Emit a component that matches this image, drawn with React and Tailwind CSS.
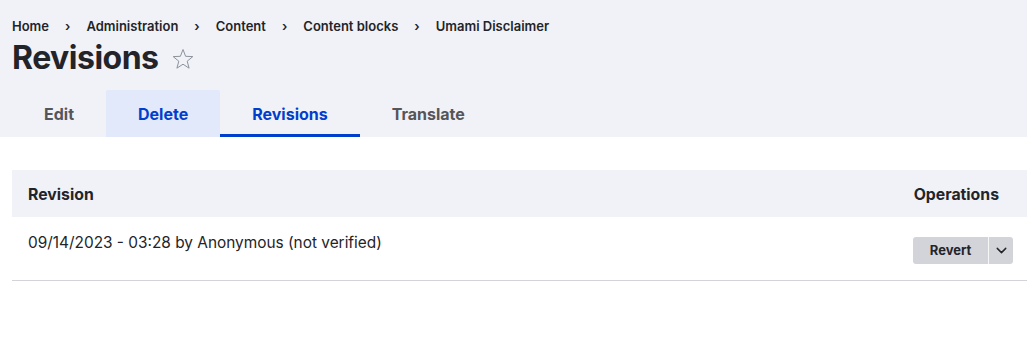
import { ChevronDown } from "lucide-react";

const crumbs = ["Home", "Administration", "Content", "Content blocks", "Umami Disclaimer"];

function Star() {
  return (
    <svg width="24" height="24" viewBox="0 0 24 24" fill="none" stroke="#8e929c" strokeWidth="1" strokeLinejoin="miter">
      <path d="M12 2.5l2.6 6.8 7.2.3-5.6 4.6 1.9 7-6.1-4-6.1 4 1.9-7-5.6-4.6 7.2-.3z" />
    </svg>
  );
}

export default function App() {
  const tabs = [
    { label: "Edit", state: "idle" },
    { label: "Delete", state: "hover" },
    { label: "Revisions", state: "active" },
    { label: "Translate", state: "idle" },
  ];

  return (
    <div className="w-[1027px] h-[340px] bg-white font-['Inter',sans-serif] text-[#232429] overflow-hidden">
      {/* HEADER */}
      <div className="bg-[#f1f2f7] pl-3 pt-[18px]">
        <nav className="flex items-center text-[13px] font-semibold leading-4">
          {crumbs.map((c, i) => (
            <span key={c} className="flex items-center">
              {i > 0 && <span className="mx-[16px] text-[#232429]">›</span>}
              {c}
            </span>
          ))}
        </nav>

        <div className="flex items-center mt-[4px] h-[40px]">
          <h1 className="text-[32px] font-bold tracking-[-0.5px] leading-10">Revisions</h1>
          <span className="ml-[12px] mt-[2px]">
            <Star />
          </span>
        </div>

        <div className="flex mt-[12px]">
          {tabs.map((t) => (
            <div
              key={t.label}
              className={
                "h-[47px] px-8 pt-[3px] flex items-center text-[16px] font-bold border-b-[3px] rounded-t-[2px] " +
                (t.state === "active"
                  ? "border-[#003ecc] text-[#003ecc]"
                  : t.state === "hover"
                  ? "border-transparent bg-[#e1e9fb] text-[#003ecc]"
                  : "border-transparent text-[#55565b]")
              }
            >
              {t.label}
            </div>
          ))}
        </div>
      </div>

      {/* TABLE */}
      <div className="ml-3 mt-[33px]">
        <div className="flex items-center justify-between h-[47px] bg-[#f1f2f7] pl-4 pr-[28px] pt-[3px] text-[15.8px] font-bold">
          <span>Revision</span>
          <span>Operations</span>
        </div>
        <div className="flex items-start justify-between h-[64px] border-b border-[#d3d4d9] pl-4 pr-[14px] pt-[14px]">
          <span className="text-[15.4px] leading-6">09/14/2023 - 03:28 by Anonymous (not verified)</span>
          <div className="flex mt-[6px] h-[27px] rounded-[3px] bg-[#d3d4d9] text-[13px] font-bold overflow-hidden">
            <span className="flex items-center pt-px px-[17px] w-[75px] justify-center">Revert</span>
            <span className="w-px bg-white/80" />
            <span className="flex items-center justify-center w-[24px]">
              <ChevronDown size={17} strokeWidth={2} color="#232429" />
            </span>
          </div>
        </div>
      </div>
    </div>
  );
}
